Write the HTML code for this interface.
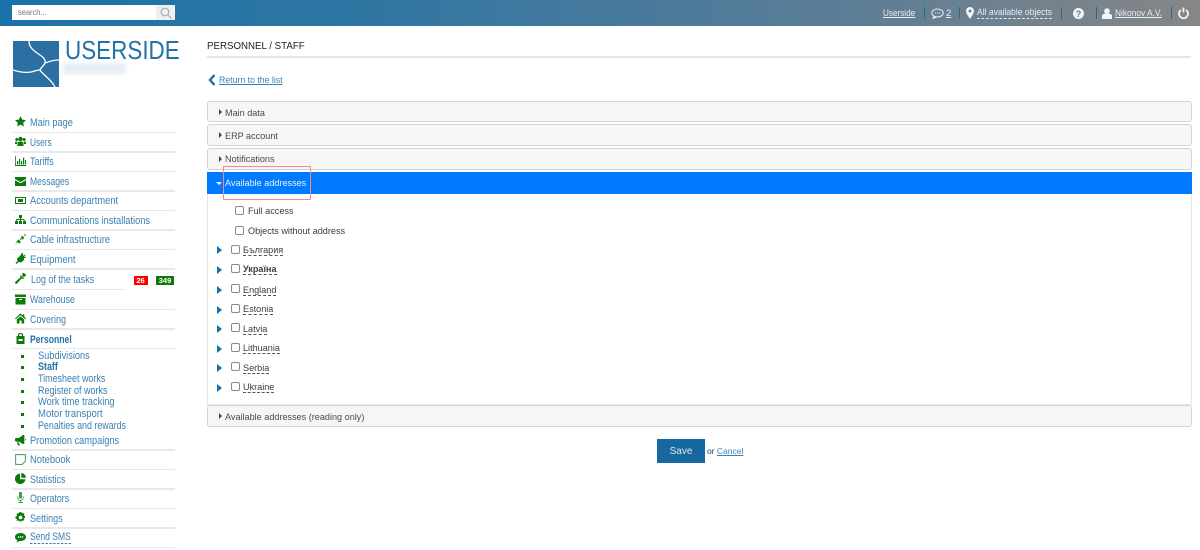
<!DOCTYPE html>
<html><head><meta charset="utf-8"><style>
html,body{margin:0;padding:0;width:1200px;height:550px;overflow:hidden;background:#fff}
body{font-family:"Liberation Sans","Noto Sans CJK SC",sans-serif;position:relative}
#w{position:absolute;left:0;top:0;width:1200px;height:550px;filter:blur(.3px)}
.a{position:absolute;white-space:nowrap;transform-origin:0 50%}
#top{left:0;top:0;width:1200px;height:26px;background:linear-gradient(90deg,#1a72a8 0%,#2f76a3 30%,#5b7d96 70%,#868686 100%)}
.t{color:#e8eef2;font-size:9.6px;top:8px;text-decoration:underline}
.sep{top:7px;width:1px;height:12px;background:#1f6c9c;position:absolute}
.m{color:#3a80b4;font-size:10.6px;left:30px;line-height:12px;margin-top:1px}
.hr{left:12px;width:163px;height:1px;background:#e9e9e9;position:absolute}
.ic{position:absolute;left:15px;width:11px;height:11px;fill:#0a7a0a}
.s{color:#3a80b4;font-size:10.6px;left:38px;line-height:12px;margin-top:1px}
.d{position:absolute;left:21px;width:3px;height:3px;background:#0a7a0a}
.acc{position:absolute;left:207px;width:983px;height:20px;background:#f6f6f6;border:1px solid #d3d3d3;border-radius:3px}
.acc span{position:absolute;left:17px;top:5px;font-size:9.1px;line-height:12px;color:#4a4a4a;white-space:nowrap}
.acc i{position:absolute;left:11px;top:7px;width:0;height:0;border-left:3px solid #444;border-top:3px solid transparent;border-bottom:3px solid transparent}
.cb{position:absolute;width:7px;height:7px;border:1px solid #8a8a8a;border-radius:2px;background:#fff}
.l{color:#3c3c3c;font-size:9.1px;line-height:12px;margin-top:1px}
.c{color:#3c3c3c;font-size:9.1px;line-height:10px;left:243px;border-bottom:1px dashed #555;margin-top:1px}
.ar{position:absolute;left:217px;width:0;height:0;border-left:5px solid #1a6fa8;border-top:4px solid transparent;border-bottom:4px solid transparent}
</style></head><body><div id="w">
<div class="a" id="top"></div>
<div class="a" style="left:12px;top:5px;width:163px;height:15px;background:#fff"></div>
<div class="a" style="left:156px;top:5px;width:19px;height:15px;background:#eef0f1"></div>
<div class="a" style="left:18px;top:7px;font-size:8.5px;line-height:11px;color:#777;transform:scaleX(.88)">search...</div>
<svg class="a" style="left:160px;top:7px" width="12" height="12" viewBox="0 0 12 12" fill="none" stroke="#aaa" stroke-width="1.2"><circle cx="5" cy="5" r="3.8"/><path d="M8 8l3.4 3.4"/></svg>

<div class="a t" style="left:883px;transform:scaleX(.85)">Userside</div><div class="sep" style="left:924px"></div>
<svg class="a" style="left:931px;top:8px" width="13" height="11" viewBox="0 0 13 11" fill="none" stroke="#e8eef2"><ellipse cx="6.5" cy="5" rx="5.7" ry="4"/><path d="M3 8.500L2 10.500 5.500 9"/><path d="M4 5h1M6 5h1M8 5h1"/></svg>
<div class="a t" style="left:946px">2</div><div class="sep" style="left:959px"></div>
<svg class="a" style="left:966px;top:7px" width="8" height="12" viewBox="0 0 8 12"><path fill="#f2f4f5" fill-rule="evenodd" d="M4 0a4 4 0 0 1 4 4c0 2.500-2.500 5.500-4 8C2.500 9.500 0 6.500 0 4a4 4 0 0 1 4-4zm0 2.500a1.500 1.500 0 1 0 0 3 1.500 1.500 0 0 0 0-3z"/></svg>
<div class="a" style="left:977px;top:8px;font-size:9.6px;color:#e8eef2;border-bottom:1px dashed #e8eef2;line-height:10px;transform:scaleX(.89)">All available objects</div><div class="sep" style="left:1061px"></div>
<svg class="a" style="left:1073px;top:8px" width="11" height="11" viewBox="0 0 11 11"><circle cx="5.500" cy="5.500" r="5.500" fill="#f2f4f5"/><text x="5.500" y="9" text-anchor="middle" font-size="9" font-weight="bold" font-family="Liberation Sans" fill="#607d8f">?</text></svg>
<div class="sep" style="left:1096px"></div>
<svg class="a" style="left:1102px;top:8px" width="10" height="11" viewBox="0 0 10 11"><circle cx="5" cy="3" r="2.800" fill="#f2f4f5"/><path fill="#f2f4f5" d="M0 11V8q0-2 3-2.500h4Q10 6 10 8v3z"/></svg>
<div class="a t" style="left:1115px;transform:scaleX(.87)">Nikonov A.V.</div><div class="sep" style="left:1171px"></div>
<svg class="a" style="left:1178px;top:7px" width="11" height="12" viewBox="0 0 11 12" fill="none" stroke="#f2f4f5" stroke-width="1.800"><path d="M3 3a4.500 4.500 0 1 0 5 0"/><path d="M5.500 0.500v5"/></svg>

<svg class="a" style="left:13px;top:41px" width="46" height="46" viewBox="0 0 46 46"><rect width="46" height="46" fill="#2c6fa3"/><g fill="none" stroke="#fff" stroke-width="1.300"><path d="M16 0c0 6 4 9 8 12 4 3 9 5 8 10-1 3-4 4-5 7"/><path d="M0 29c6 2 12 3 18 2 4-1 6-2 9-2"/><path d="M32 22c5-2 9-3 14-3"/><path d="M27 29c3 5 11 9 15 17"/></g></svg>
<div class="a" style="left:65px;top:36px;font-size:25.5px;line-height:30px;color:#2272a8;transform:scaleX(.88)">USERSIDE</div>
<div class="a" style="left:63px;top:63px;width:63px;height:11px;background:#e6edf4;filter:blur(2px)"></div>

<div class="a" style="left:207px;top:40px;font-size:10.5px;line-height:13px;color:#222;transform:scaleX(.925)">PERSONNEL / STAFF</div>
<div class="a" style="left:207px;top:56px;width:984px;height:2px;background:#e6e6e6"></div>
<svg class="a" style="left:208px;top:74px" width="8" height="12" viewBox="0 0 8 12" fill="none" stroke="#1a6fa8" stroke-width="2.400"><path d="M6.500 1L2 6l4.500 5"/></svg>
<div class="a" style="left:219px;top:74px;font-size:9px;line-height:12px;color:#3a80b4;text-decoration:underline;transform:scaleX(.97)">Return to the list</div>

<div class="m a" style="top:116px;transform:scaleX(.865)">Main page</div><div class="hr" style="top:132px"></div>
<div class="m a" style="top:136px;transform:scaleX(.78)">Users</div><div class="hr" style="top:151px;height:2px"></div>
<div class="m a" style="top:155px;transform:scaleX(.845)">Tariffs</div><div class="hr" style="top:171px"></div>
<div class="m a" style="top:175px;transform:scaleX(.81)">Messages</div><div class="hr" style="top:190px;height:2px"></div>
<div class="m a" style="top:194px;transform:scaleX(.88)">Accounts department</div><div class="hr" style="top:210px"></div>
<div class="m a" style="top:214px;transform:scaleX(.875)">Communications installations</div><div class="hr" style="top:229px;height:2px"></div>
<div class="m a" style="top:233px;transform:scaleX(.865)">Cable infrastructure</div><div class="hr" style="top:249px"></div>
<div class="m a" style="top:253px;transform:scaleX(.9)">Equipment</div><div class="hr" style="top:268px;height:2px"></div>
<div class="m a" style="top:273px;left:30.7px;transform:scaleX(.845)">Log of the tasks</div><div class="hr" style="top:289px;width:114px"></div>
<div class="a" style="left:133.5px;top:276px;width:14px;height:9px;background:#f00;color:#fff;font-size:7.5px;font-weight:bold;line-height:9px;text-align:center">26</div>
<div class="a" style="left:156px;top:276px;width:18px;height:9px;background:#0a7a0a;color:#fff;font-size:7.5px;font-weight:bold;line-height:9px;text-align:center">349</div>
<div class="m a" style="top:293px;transform:scaleX(.835)">Warehouse</div><div class="hr" style="top:309px"></div>
<div class="m a" style="top:313px;transform:scaleX(.85)">Covering</div><div class="hr" style="top:328px;height:2px"></div>
<div class="m a" style="top:333px;font-weight:bold;color:#2272a8;transform:scaleX(.815)">Personnel</div><div class="hr" style="top:348px"></div>
<div class="s a" style="top:349px;transform:scaleX(.87)">Subdivisions</div><div class="d" style="top:355px"></div>
<div class="s a" style="top:360px;font-weight:bold;color:#2272a8;transform:scaleX(.845)">Staff</div><div class="d" style="top:366px"></div>
<div class="s a" style="top:372px;transform:scaleX(.845)">Timesheet works</div><div class="d" style="top:378px"></div>
<div class="s a" style="top:384px;transform:scaleX(.85)">Register of works</div><div class="d" style="top:390px"></div>
<div class="s a" style="top:395px;transform:scaleX(.875)">Work time tracking</div><div class="d" style="top:401px"></div>
<div class="s a" style="top:407px;transform:scaleX(.9)">Motor transport</div><div class="d" style="top:413px"></div>
<div class="s a" style="top:419px;transform:scaleX(.84)">Penalties and rewards</div><div class="d" style="top:425px"></div>
<div class="m a" style="top:434px;transform:scaleX(.87)">Promotion campaigns</div><div class="hr" style="top:449px;height:2px"></div>
<div class="m a" style="top:453px;transform:scaleX(.89)">Notebook</div><div class="hr" style="top:469px"></div>
<div class="m a" style="top:473px;transform:scaleX(.835)">Statistics</div><div class="hr" style="top:488px;height:2px"></div>
<div class="m a" style="top:492px;transform:scaleX(.83)">Operators</div><div class="hr" style="top:508px"></div>
<div class="m a" style="top:512px;transform:scaleX(.855)">Settings</div><div class="hr" style="top:527px;height:2px"></div>
<div class="m a" style="top:531px;border-bottom:1px dashed #3a80b4;line-height:11px;transform:scaleX(.805)">Send SMS</div><div class="hr" style="top:547px"></div>

<svg class="ic" style="top:116px" viewBox="0 0 11 11"><path d="M5.500 0l1.700 3.600 3.800.5-2.800 2.600.7 3.800-3.400-1.900-3.400 1.900.7-3.800L0 4.100l3.800-.5z"/></svg>
<svg class="ic" style="top:136px" viewBox="0 0 11 11"><circle cx="5.500" cy="3" r="2.200"/><circle cx="1.800" cy="3.500" r="1.500"/><circle cx="9.200" cy="3.500" r="1.500"/><path d="M2.500 10V7q0-1.500 3-1.500t3 1.500v3zM0 8V6.500Q0 5.500 2 5.500V8zM11 8V6.500q0-1-2-1V8z"/></svg>
<svg class="ic" style="top:155px" viewBox="0 0 11 11"><path d="M0 1h.8v9H11v1H0zM2 6h1.200v3.500H2zM4 4h1.200v5.500H4zM6 6h1.200v3.500H6zM8 2.500h1.200v7H8zM10 5h1v4.500h-1z"/></svg>
<svg class="ic" style="top:176px" viewBox="0 0 11 9"><path d="M0 0h11v2L5.500 5 0 2zM0 3.200l5.500 3 5.500-3V9H0z"/></svg>
<svg class="ic" style="top:195px" viewBox="0 0 11 9"><path fill-rule="evenodd" d="M0 1h11v7H0zM1 2v5h9V2zM3 3h5v3H3z"/><circle cx="5.500" cy="4.500" r="1.300"/></svg>
<svg class="ic" style="top:214px" viewBox="0 0 11 11"><path d="M4 1h3v3H6v1h3.500v2H10v0h1v3H8V7h.8V6H6v1h1v3H4V7h1V6H2.200v1H3v3H0V7h1.200V5H5V4H4z"/></svg>
<svg class="ic" style="top:234px" viewBox="0 0 11 11"><path d="M7 1.500l2.500 2.500-2 1.500L6 4zM3.500 5.500L6 8 4 9.500 2.500 8 1 10 0.500 9.500 2 8 1.500 7.500zM4.700 5l1.300 1.300.7-.7-1.300-1.300zM9 1l1-1 1 1-1 1z"/></svg>
<svg class="ic" style="top:253px" viewBox="0 0 11 11"><path d="M7 0h1v3l1.500-1.500.8.800L8.800 3.800 11 3.800v1L9 5v2L6 9.500 3.500 9 1.500 11 .5 10l2-2L2 5.500 5 3z"/></svg>
<svg class="ic" style="top:273px" viewBox="0 0 11 11"><path d="M8 0c1.500 0 3 1.200 3 2.800l-2.300 1.200L7 3l.8-1.500L7 .5C7.300.2 7.600 0 8 0zM6 1.500c0 1 .5 2.500 3.500 3.500C8.500 6 7.500 6 6.500 5.500L2 10.500c-.5.500-1.500.5-1.800-.2-.3-.5-.2-1 .2-1.400L5.500 4.300C5.200 3.300 5.300 2.300 6 1.500z"/></svg>
<svg class="ic" style="top:294px" viewBox="0 0 11 10"><path fill-rule="evenodd" d="M0 0h11v2.500H0zM.5 3.500h10V10H.5zM4 4.500v1h3v-1z"/></svg>
<svg class="ic" style="top:313px" viewBox="0 0 11 10"><path d="M5.500 0L8 2V.7h1.300v2.600L11 5l-.7.700-4.800-4-4.800 4L0 5zM1.800 6l3.700-3 3.700 3v4H6.500V7h-2v3H1.800z"/></svg>
<svg class="ic" style="top:333px" viewBox="0 0 11 11"><path fill-rule="evenodd" d="M3 3V2Q3 0 5.500 0T8 2v1h1.500v8h-8V3zM4.200 3h2.600V2q0-1-1.300-1T4.200 2zM3.500 6v2h4V6z"/></svg>
<svg class="ic" style="top:435px" viewBox="0 0 11 11"><path d="M8 0h1.300v9H8L4 6.800H1.500L0 6V3.500L1.500 3H4zM2 7.500h2l.8 3H3zM10 3.500l1 1.200-1 1.300z"/></svg>
<svg class="ic" style="top:454px" viewBox="0 0 11 11"><path fill="none" stroke="#5fa05f" stroke-width="1.100" d="M.6.600h9.800v6.500l-3.300 3.300H.6z"/></svg>
<svg class="ic" style="top:473px" viewBox="0 0 11 11"><path d="M5 .5v5.700h5.500A5.300 5.300 0 1 1 5 .5zM6.300 0A4.900 4.900 0 0 1 11 4.800H6.300z"/></svg>
<svg class="ic" style="top:492px;opacity:.75" viewBox="0 0 11 11"><path d="M4 0h3v6.500H4zM2.500 4h.7v2.500q.2 1.500 2.300 1.500t2.300-1.500V4h.7v2.500q-.2 2-2.500 2.300V10h2v1H3.500v-1h1.500V8.800Q2.700 8.500 2.500 6.500z"/></svg>
<svg class="ic" style="top:512px" viewBox="0 0 11 11"><path fill-rule="evenodd" d="M4.500 0h2l.3 1.500 1.300-.7 1.400 1.400-.8 1.300 1.300.5v2l-1.400.3.800 1.300-1.400 1.400-1.300-.8-.2 1.300h-2l-.3-1.300-1.300.8L1.500 8.300l.8-1.300L.5 6.500v-2l1.800-.5-.8-1.300L2.900.8l1.300.7zM5.500 3.700a1.800 1.800 0 1 0 0 3.600 1.800 1.800 0 0 0 0-3.600z"/></svg>
<svg class="ic" style="top:532px" viewBox="0 0 11 11"><path fill-rule="evenodd" d="M5.500 1C8.500 1 11 2.700 11 5S8.500 9 5.500 9H4.500L1.500 10.500 2.300 8.300C.8 7.600 0 6.400 0 5 0 2.700 2.500 1 5.500 1zM3 4.300v1.400h1.200V4.300zM5 4.300v1.400h1.200V4.300zM7 4.300v1.400h1.200V4.300z"/></svg>

<div class="acc" style="top:101px;height:19px"><i></i><span>Main data</span></div>
<div class="acc" style="top:124px"><i></i><span>ERP account</span></div>
<div class="acc" style="top:148px"><i></i><span style="top:4px">Notifications</span></div>
<div class="a" style="left:207px;top:172px;width:985px;height:22px;background:#007bff"></div>
<div class="a" style="left:225px;top:177px;font-size:9.1px;line-height:12px;color:#e8f2ff">Available addresses</div>
<div class="a" style="left:216px;top:182px;width:0;height:0;border-top:3px solid #fff;border-left:3px solid transparent;border-right:3px solid transparent"></div>
<div class="a" style="left:223px;top:166px;width:86px;height:32px;border:1px solid #f08a92;border-radius:1px"></div>
<div class="a" style="left:207px;top:194px;width:983px;height:210px;border:1px solid #e8e8e8;border-top:0"></div>

<div class="cb" style="left:234.5px;top:206px"></div><div class="a l" style="left:248px;top:204px">Full access</div>
<div class="cb" style="left:234.5px;top:226px"></div><div class="a l" style="left:248px;top:224px">Objects without address</div>

<div class="ar" style="top:246px"></div><div class="cb" style="left:230.5px;top:245px"></div><div class="a c" style="top:244px">България</div>
<div class="ar" style="top:266px"></div><div class="cb" style="left:230.5px;top:264px"></div><div class="a c" style="top:263px;font-weight:bold">Україна</div>
<div class="ar" style="top:286px"></div><div class="cb" style="left:230.5px;top:284px"></div><div class="a c" style="top:284px">England</div>
<div class="ar" style="top:306px"></div><div class="cb" style="left:230.5px;top:304px"></div><div class="a c" style="top:303px">Estonia</div>
<div class="ar" style="top:325px"></div><div class="cb" style="left:230.5px;top:323px"></div><div class="a c" style="top:323px">Latvia</div>
<div class="ar" style="top:345px"></div><div class="cb" style="left:230.5px;top:343px"></div><div class="a c" style="top:342px">Lithuania</div>
<div class="ar" style="top:364px"></div><div class="cb" style="left:230.5px;top:362px"></div><div class="a c" style="top:362px">Serbia</div>
<div class="ar" style="top:384px"></div><div class="cb" style="left:230.5px;top:382px"></div><div class="a c" style="top:381px">Ukraine</div>

<div class="acc" style="top:405px"><i></i><span>Available addresses (reading only)</span></div>

<div class="a" style="left:657px;top:439px;width:48px;height:24px;background:#17689f;color:#dfe9f0;font-size:10px;line-height:25px;text-align:center">Save</div>
<div class="a" style="left:707px;top:445px;font-size:8.5px;line-height:12px;color:#333">or <span style="color:#3a80b4;text-decoration:underline">Cancel</span></div>
</div></body></html>
